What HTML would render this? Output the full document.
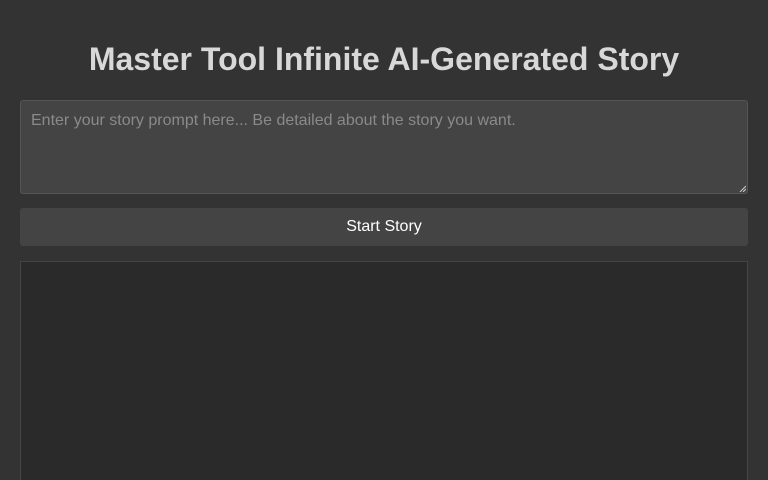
<!DOCTYPE html>
<html><head><style>
html,body{margin:0;padding:0;background:#333;width:768px;height:480px;overflow:hidden;font-family:"Liberation Sans",Arial,sans-serif;}
h1{position:absolute;top:40px;left:0;width:768px;margin:0;text-align:center;font-size:32px;line-height:38px;font-weight:bold;color:#d8d8d8;}
.ta{position:absolute;left:20px;top:100px;width:726px;height:92px;background:#444;border:1px solid #555;border-radius:3px;}
.ta span{position:absolute;left:10px;top:10px;font-size:16px;line-height:19px;color:#8a8a8a;}
.grip{position:absolute;right:1px;bottom:1px;width:7px;height:7px;}
.btn{position:absolute;left:20px;top:208px;width:728px;height:38px;background:#444;border-radius:3px;color:#fff;font-size:16px;line-height:38px;text-align:center;}
.out{position:absolute;left:20px;top:261px;width:726px;height:218px;background:#2a2a2a;border:1px solid #444;border-bottom:none;}
</style></head><body>
<h1>Master Tool Infinite AI-Generated Story</h1>
<div class="ta"><span>Enter your story prompt here... Be detailed about the story you want.</span>
<svg class="grip" viewBox="0 0 7 7"><path d="M1 7L7 1M4 7L7 4" stroke="#ccc" stroke-width="1"/></svg></div>
<div class="btn">Start Story</div>
<div class="out"></div>
</body></html>
